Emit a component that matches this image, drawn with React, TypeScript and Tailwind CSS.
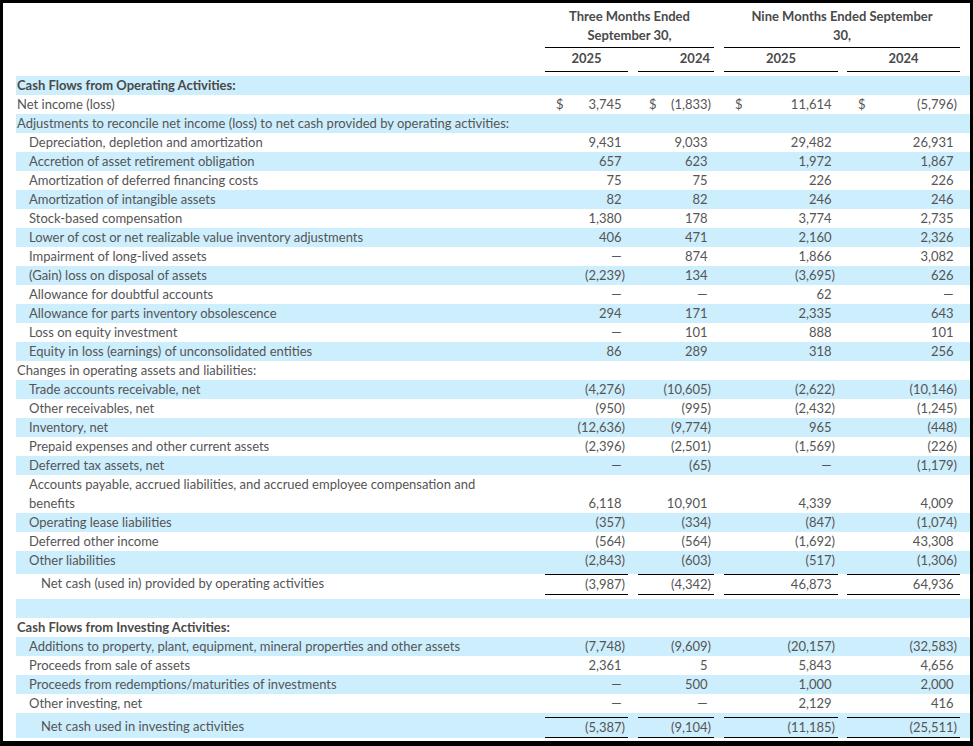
type Row = {
  label: string;
  kind?: "head" | "sub" | "total" | "plain" | "blank";
  v?: string[];
  dollar?: boolean;
  tall?: boolean;
};

const rows: Row[] = [
  { label: "Cash Flows from Operating Activities:", kind: "head" },
  { label: "Net income (loss)", kind: "plain", v: ["3,745", "(1,833)", "11,614", "(5,796)"], dollar: true },
  { label: "Adjustments to reconcile net income (loss) to net cash provided by operating activities:", kind: "plain" },
  { label: "Depreciation, depletion and amortization", v: ["9,431", "9,033", "29,482", "26,931"] },
  { label: "Accretion of asset retirement obligation", v: ["657", "623", "1,972", "1,867"] },
  { label: "Amortization of deferred financing costs", v: ["75", "75", "226", "226"] },
  { label: "Amortization of intangible assets", v: ["82", "82", "246", "246"] },
  { label: "Stock-based compensation", v: ["1,380", "178", "3,774", "2,735"] },
  { label: "Lower of cost or net realizable value inventory adjustments", v: ["406", "471", "2,160", "2,326"] },
  { label: "Impairment of long-lived assets", v: ["—", "874", "1,866", "3,082"] },
  { label: "(Gain) loss on disposal of assets", v: ["(2,239)", "134", "(3,695)", "626"] },
  { label: "Allowance for doubtful accounts", v: ["—", "—", "62", "—"] },
  { label: "Allowance for parts inventory obsolescence", v: ["294", "171", "2,335", "643"] },
  { label: "Loss on equity investment", v: ["—", "101", "888", "101"] },
  { label: "Equity in loss (earnings) of unconsolidated entities", v: ["86", "289", "318", "256"] },
  { label: "Changes in operating assets and liabilities:", kind: "plain" },
  { label: "Trade accounts receivable, net", v: ["(4,276)", "(10,605)", "(2,622)", "(10,146)"] },
  { label: "Other receivables, net", v: ["(950)", "(995)", "(2,432)", "(1,245)"] },
  { label: "Inventory, net", v: ["(12,636)", "(9,774)", "965", "(448)"] },
  { label: "Prepaid expenses and other current assets", v: ["(2,396)", "(2,501)", "(1,569)", "(226)"] },
  { label: "Deferred tax assets, net", v: ["—", "(65)", "—", "(1,179)"] },
  { label: "Accounts payable, accrued liabilities, and accrued employee compensation and benefits", v: ["6,118", "10,901", "4,339", "4,009"], tall: true },
  { label: "Operating lease liabilities", v: ["(357)", "(334)", "(847)", "(1,074)"] },
  { label: "Deferred other income", v: ["(564)", "(564)", "(1,692)", "43,308"] },
  { label: "Other liabilities", v: ["(2,843)", "(603)", "(517)", "(1,306)"] },
  { label: "Net cash (used in) provided by operating activities", kind: "total", v: ["(3,987)", "(4,342)", "46,873", "64,936"] },
  { label: "", kind: "blank" },
  { label: "Cash Flows from Investing Activities:", kind: "head" },
  { label: "Additions to property, plant, equipment, mineral properties and other assets", v: ["(7,748)", "(9,609)", "(20,157)", "(32,583)"] },
  { label: "Proceeds from sale of assets", v: ["2,361", "5", "5,843", "4,656"] },
  { label: "Proceeds from redemptions/maturities of investments", v: ["—", "500", "1,000", "2,000"] },
  { label: "Other investing, net", v: ["—", "—", "2,129", "416"] },
  { label: "Net cash used in investing activities", kind: "total", v: ["(5,387)", "(9,104)", "(11,185)", "(25,511)"] },
];

const grid = "grid grid-cols-[529px_83px_10px_76px_10px_114px_9px_113px]";

function Val({ v, dollar, total }: { v?: string; dollar?: boolean; total?: boolean }) {
  const neg = v?.endsWith(")");
  return (
    <div className={`flex justify-between items-end pr-[3px] ${total ? "border-t border-b border-black" : ""}`}>
      <span className="pl-[11px]">{dollar ? "$" : ""}</span>
      <span>
        {v}
        {v && !neg ? <span className="invisible">)</span> : null}
      </span>
    </div>
  );
}

export default function App() {
  return (
    <div
      className="w-[973px] h-[746px] bg-white overflow-hidden border-black border-x-[3px] border-t-[3px] border-b-[5px] text-[13px] text-[#555] leading-[19px]"
      style={{ fontFamily: "Lato, 'Open Sans', sans-serif" }}
    >
      <div className="pl-[13px] pt-[4px]">
        <div className={`${grid} font-bold text-[#4a4a4a]`}>
          <div />
          <div className="col-span-3 text-center border-b border-black pb-[2px]">
            Three Months Ended
            <br />
            September 30,
          </div>
          <div />
          <div className="col-span-3 text-center border-b border-black pb-[2px]">
            Nine Months Ended September
            <br />
            30,
          </div>
        </div>
        <div className={`${grid} font-bold text-[#4a4a4a] h-[24px] items-center`}>
          <div />
          <div className="text-center h-full border-b border-black pt-[1px]">2025</div>
          <div />
          <div className="text-right pr-[4px] h-full border-b border-black pt-[1px]">2024</div>
          <div />
          <div className="text-center h-full border-b border-black pt-[1px]">2025</div>
          <div />
          <div className="text-center h-full border-b border-black pt-[1px]">2024</div>
        </div>
        <div className="h-[4px]" />
        {rows.map((r, i) => {
          const bg = i % 2 === 0 ? "bg-[#cdeefd]" : "bg-white";
          const total = r.kind === "total";
          const pad =
            r.kind === "head" || r.kind === "plain" ? "pl-[1px]" : total ? "pl-[25px]" : "pl-[13px]";
          return (
            <div key={i}>
              {total && <div className={`${grid} h-[4px] bg-[#cdeefd]`} />}
              <div className={`${grid} ${bg} ${r.tall ? "min-h-[38px]" : total ? "h-[21px]" : "h-[19px]"}`}>
                <div className={`${pad} ${r.kind === "head" ? "font-bold text-[#4a4a4a]" : ""} ${r.tall ? "pr-[48px] leading-[19px]" : "whitespace-nowrap"}`}>
                  {r.label}
                </div>
                {r.v ? (
                  <>
                    <Val v={r.v[0]} dollar={r.dollar} total={total} />
                    <div />
                    <Val v={r.v[1]} dollar={r.dollar} total={total} />
                    <div />
                    <Val v={r.v[2]} dollar={r.dollar} total={total} />
                    <div />
                    <Val v={r.v[3]} dollar={r.dollar} total={total} />
                  </>
                ) : null}
              </div>
              {total && <div className={`${grid} h-[4px] bg-white`} />}
            </div>
          );
        })}
      </div>
    </div>
  );
}
